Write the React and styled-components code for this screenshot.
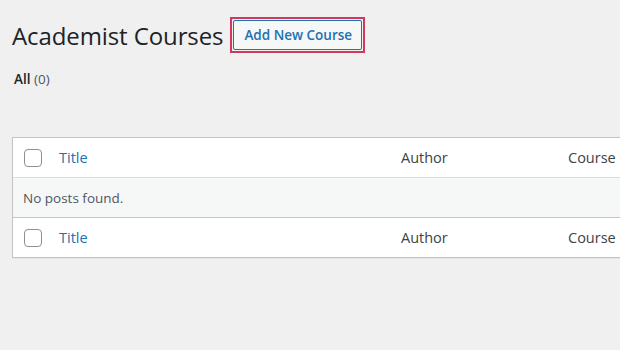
import React from "react";
import styled, { createGlobalStyle } from "styled-components";

const Global = createGlobalStyle`
  html, body { margin: 0; padding: 0; background: #f0f0f1; }
  body { font-family: "Open Sans", "Noto Sans", sans-serif; color: #3c434a; }
`;

const Page = styled.div`
  width: 620px;
  height: 350px;
  overflow: hidden;
  padding: 17px 0 0 12px;
  box-sizing: border-box;
`;

const Header = styled.div`
  display: flex;
  align-items: center;
  gap: 7px;
`;

const Heading = styled.h1`
  margin: 0;
  font-size: 24px;
  font-weight: 400;
  color: #1d2327;
  letter-spacing: -0.1px;
`;

const Highlight = styled.div`
  border: 2px solid #d0385e;
  padding: 1px;
`;

const Button = styled.button`
  font-family: inherit;
  font-size: 13.5px;
  font-weight: 600;
  color: #2271b1;
  background: #f6f7f7;
  border: 1px solid #2271b1;
  border-radius: 2px;
  height: 30px;
  padding: 0 9px 0 10px;
  cursor: pointer;
`;

const Filters = styled.div`
  margin-top: 17px;
  font-size: 13.5px;
  padding-left: 2px;
  color: #50575e;
`;

const Current = styled.span`
  font-weight: 600;
  color: #1d2327;
`;

const Table = styled.div`
  margin-top: 49px;
  width: 640px;
  background: #fff;
  border: 1px solid #c3c4c7;
  border-right: none;
  box-shadow: 0 1px 1px rgba(0,0,0,0.04);
`;

const Row = styled.div`
  display: grid;
  grid-template-columns: 46px 342px 167px 1fr;
  align-items: center;
  height: 39px;
  font-size: 14.5px;
  background: #fff;
  border-top: ${p => (p.$sep ? "1px solid #c3c4c7" : "none")};
`;

const EmptyRow = styled.div`
  height: 39px;
  display: flex;
  align-items: center;
  padding-left: 10px;
  font-size: 13.5px;
  color: #50575e;
  background: #f6f7f7;
  border-top: 1px solid #dcdcde;
`;

const Check = styled.span`
  display: block;
  width: 16px;
  height: 16px;
  margin-left: 11px;
  border: 1px solid #8c8f94;
  border-radius: 4px;
  background: #fff;
`;

const TitleLink = styled.a`
  color: #2271b1;
  text-decoration: none;
`;

const Col = styled.span`
  color: #3c434a;
`;

function HeadRow({ sep }) {
  return (
    <Row $sep={sep}>
      <Check />
      <TitleLink href="#">Title</TitleLink>
      <Col>Author</Col>
      <Col>Course</Col>
    </Row>
  );
}

export default function App() {
  return (
    <Page>
      <Global />
      <Header>
        <Heading>Academist Courses</Heading>
        <Highlight>
          <Button>Add New Course</Button>
        </Highlight>
      </Header>
      <Filters>
        <Current>All</Current> (0)
      </Filters>
      <Table>
        <HeadRow />
        <EmptyRow>No posts found.</EmptyRow>
        <HeadRow sep />
      </Table>
    </Page>
  );
}
